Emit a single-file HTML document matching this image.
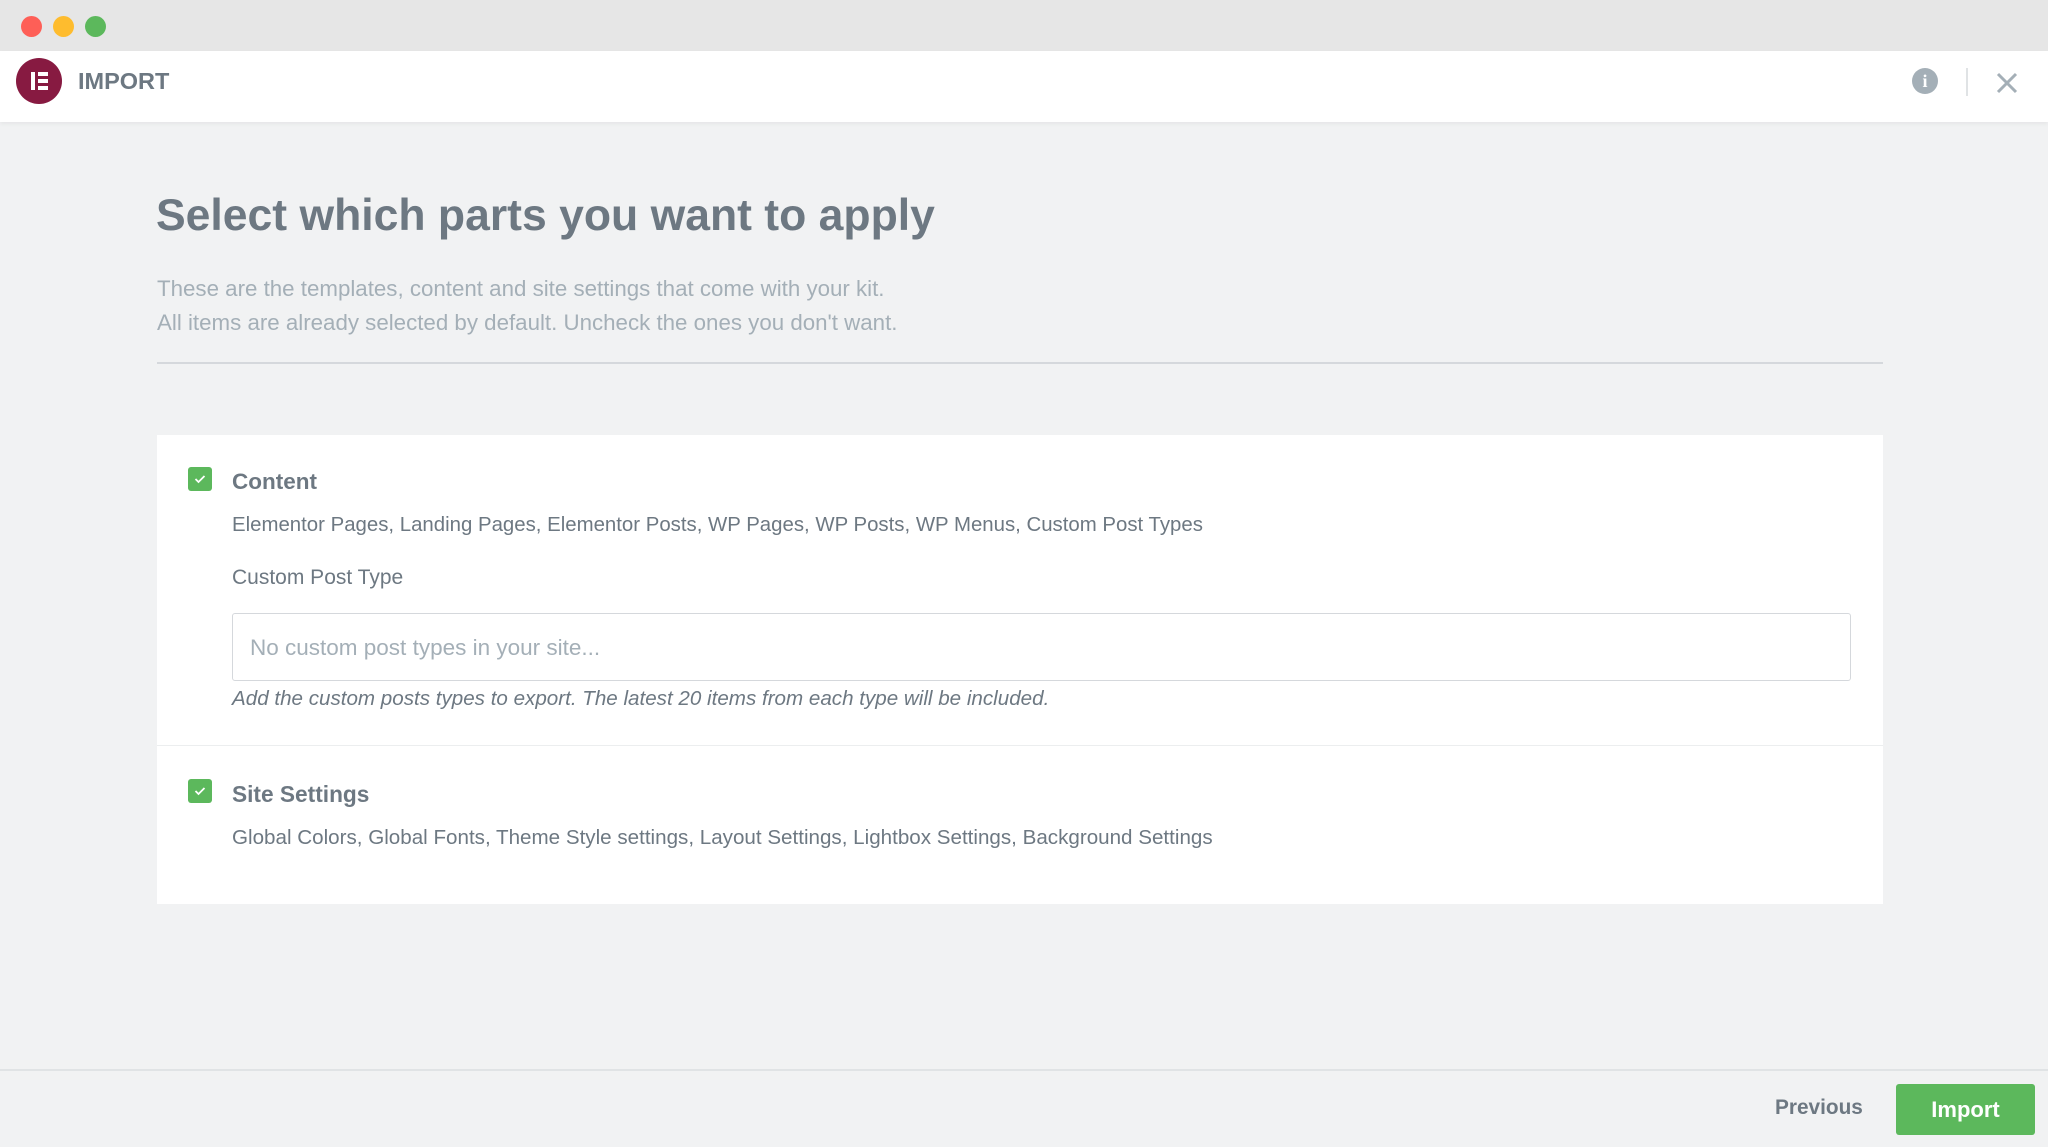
<!DOCTYPE html>
<html><head><meta charset="utf-8"><style>
*{box-sizing:border-box;margin:0;padding:0}
body{width:2048px;height:1147px;background:#f1f2f3;font-family:"Liberation Sans",Roboto,sans-serif;position:relative;overflow:hidden;color:#6d7882}
.abs{position:absolute}
.tb{left:0;top:0;width:2048px;height:51px;background:#e6e6e6}
.dot{width:21px;height:21px;border-radius:50%;top:16px}
.hd{left:0;top:51px;width:2048px;height:71px;background:#fff;box-shadow:0 2px 4px rgba(0,0,0,.05)}
.t{white-space:nowrap}
.card{left:157px;top:435px;width:1726px;height:469px;background:#fff}
.cb{width:24px;height:24px;background:#5cb85c;border-radius:3px}
.cb svg{position:absolute;left:6px;top:7px}
</style></head><body>
<div class="abs tb"></div>
<div class="abs dot" style="left:21px;background:#fe5f57"></div>
<div class="abs dot" style="left:53px;background:#febc2e"></div>
<div class="abs dot" style="left:85px;background:#5cb85c"></div>
<div class="abs hd"></div>
<div class="abs" style="left:16px;top:58px;width:46px;height:46px;border-radius:50%;background:#871a41">
<div class="abs" style="left:15px;top:14px;width:4px;height:18px;background:#fff"></div>
<div class="abs" style="left:22px;top:14px;width:10px;height:4px;background:#fff"></div>
<div class="abs" style="left:22px;top:21px;width:10px;height:4px;background:#fff"></div>
<div class="abs" style="left:22px;top:28px;width:10px;height:4px;background:#fff"></div>
</div>
<div class="abs t" style="left:78px;top:68px;font-size:23.5px;font-weight:bold;color:#6d7882">IMPORT</div>
<div class="abs" style="left:1912px;top:68px;width:26px;height:26px;border-radius:50%;background:#a4afb7;color:#fff;font:bold 18px/26px 'Liberation Serif',serif;text-align:center">i</div>
<div class="abs" style="left:1966px;top:68px;width:2px;height:28px;background:#e0e3e5"></div>
<svg class="abs" style="left:1996px;top:72px" width="22" height="22"><path d="M2 2L20 20M20 2L2 20" stroke="#a4afb7" stroke-width="3"/></svg>
<div class="abs t" style="left:156px;top:191px;font-size:44.5px;font-weight:bold;color:#6d7882">Select which parts you want to apply</div>
<div class="abs t" style="left:157px;top:272px;font-size:22.3px;line-height:34px;color:#a4afb7">These are the templates, content and site settings that come with your kit.<br>All items are already selected by default. Uncheck the ones you don't want.</div>
<div class="abs" style="left:157px;top:362px;width:1726px;height:2px;background:#d5d8dc"></div>
<div class="abs card"></div>
<div class="abs cb" style="left:188px;top:467px"><svg width="12" height="10"><path d="M1.5 5L4.5 8L10.5 2" stroke="#fff" stroke-width="1.8" fill="none"/></svg></div>
<div class="abs t" style="left:232px;top:469px;font-size:22.5px;font-weight:bold">Content</div>
<div class="abs t" style="left:232px;top:514px;font-size:20.4px">Elementor Pages, Landing Pages, Elementor Posts, WP Pages, WP Posts, WP Menus, Custom Post Types</div>
<div class="abs t" style="left:232px;top:566px;font-size:21px">Custom Post Type</div>
<div class="abs" style="left:232px;top:613px;width:1619px;height:68px;border:1px solid #d5d8dc;border-radius:3px"></div>
<div class="abs t" style="left:250px;top:635px;font-size:22.5px;color:#a4afb7">No custom post types in your site...</div>
<div class="abs t" style="left:232px;top:687px;font-size:20.6px;font-style:italic">Add the custom posts types to export. The latest 20 items from each type will be included.</div>
<div class="abs" style="left:157px;top:745px;width:1726px;height:1px;background:#eceeef"></div>
<div class="abs cb" style="left:188px;top:779px"><svg width="12" height="10"><path d="M1.5 5L4.5 8L10.5 2" stroke="#fff" stroke-width="1.8" fill="none"/></svg></div>
<div class="abs t" style="left:232px;top:781px;font-size:22.7px;font-weight:bold">Site Settings</div>
<div class="abs t" style="left:232px;top:826px;font-size:20.6px">Global Colors, Global Fonts, Theme Style settings, Layout Settings, Lightbox Settings, Background Settings</div>
<div class="abs" style="left:0;top:1069px;width:2048px;height:2px;background:#e0e3e5"></div>
<div class="abs t" style="left:1775px;top:1096px;font-size:20.8px;font-weight:bold">Previous</div>
<div class="abs" style="left:1896px;top:1084px;width:139px;height:51px;background:#5cb85c;border-radius:3px;color:#fff;font-size:22px;font-weight:bold;text-align:center;line-height:51px">Import</div>
</body></html>
